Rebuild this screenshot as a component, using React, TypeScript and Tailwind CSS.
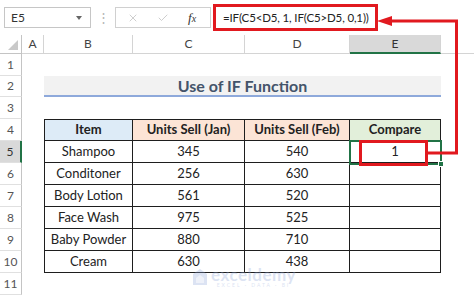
import { Check, X } from "lucide-react";

type Row = {
  n: number;
  h: string;
};

const rows: Row[] = [
  { n: 1, h: "h-[22px]" },
  { n: 2, h: "h-[21px]" },
  { n: 3, h: "h-[22px]" },
  { n: 4, h: "h-[22px]" },
  { n: 5, h: "h-[22px]" },
  { n: 6, h: "h-[22px]" },
  { n: 7, h: "h-[22px]" },
  { n: 8, h: "h-[22px]" },
  { n: 9, h: "h-[22px]" },
  { n: 10, h: "h-[22px]" },
  { n: 11, h: "h-[22px]" },
];

const data: Record<number, [string, string, string, string]> = {
  5: ["Shampoo", "345", "540", "1"],
  6: ["Conditoner", "256", "630", ""],
  7: ["Body Lotion", "561", "520", ""],
  8: ["Face Wash", "975", "525", ""],
  9: ["Baby Powder", "880", "710", ""],
  10: ["Cream", "630", "438", ""],
};

const cell = "flex items-center justify-center shrink-0";
const line = "border-r border-b border-[#1e1e1e]";

const RowHeader = ({ n }: { n: number }) => (
  <div
    className={`${cell} w-[22px] text-[12px] border-b border-[#e0e0e0] ${
      n === 5
        ? "bg-[#d9d9d9] border-r-2 border-r-[#217346] text-[#333]"
        : "border-r border-r-[#c4c4c4] text-[#555]"
    }`}
  >
    {n}
  </div>
);

const SheetRow = ({ row }: { row: Row }) => {
  const d = data[row.n];

  return (
    <div className={`flex ${row.h}`}>
      <RowHeader n={row.n} />
      <div className="w-[22px] shrink-0" />
      {row.n === 2 && (
        <div className="w-[397px] shrink-0 bg-[#f2f2f2] border-b-2 border-[#8ea9db] flex items-center justify-center text-[16px] font-bold text-[#44546a]">
          Use of IF Function
        </div>
      )}
      {row.n === 4 && (
        <>
          <div className={`${cell} ${line} border-l border-t w-[89px] bg-[#ddebf7] font-bold`}>
            Item
          </div>
          <div className={`${cell} ${line} border-t w-[112px] bg-[#fce4d6] font-bold`}>
            Units Sell (Jan)
          </div>
          <div className={`${cell} ${line} border-t w-[105px] bg-[#fce4d6] font-bold`}>
            Units Sell (Feb)
          </div>
          <div className={`${cell} ${line} border-t w-[91px] bg-[#e2efda] font-bold`}>
            Compare
          </div>
        </>
      )}
      {d && (
        <>
          <div className={`${cell} ${line} border-l w-[89px]`}>{d[0]}</div>
          <div className={`${cell} ${line} w-[112px]`}>{d[1]}</div>
          <div className={`${cell} ${line} w-[105px]`}>{d[2]}</div>
          <div className={`${cell} ${line} w-[91px]`}>{d[3]}</div>
        </>
      )}
    </div>
  );
};

const ColHeader = () => (
  <div className="flex h-[19px] text-[12px] text-[#444]">
    <div className="w-[22px] shrink-0 border-r border-b border-[#c4c4c4] flex items-end justify-end p-[3px]">
      <div className="w-0 h-0 border-l-[10px] border-l-transparent border-b-[10px] border-b-[#c9c9c9]" />
    </div>
    <div className={`${cell} w-[22px] border-r border-b border-[#d4d4d4]`}>A</div>
    <div className={`${cell} w-[89px] border-r border-b border-[#d4d4d4]`}>B</div>
    <div className={`${cell} w-[112px] border-r border-b border-[#d4d4d4]`}>C</div>
    <div className={`${cell} w-[105px] border-r border-b border-[#d4d4d4]`}>D</div>
    <div className={`${cell} w-[91px] bg-[#d9d9d9] border-r border-[#d4d4d4] border-b-2 border-b-[#217346] text-[#333]`}>
      E
    </div>
    <div className="flex-1 border-b border-[#d4d4d4]" />
  </div>
);

const Toolbar = () => (
  <div className="flex items-center h-[35px] text-[#333]">
    <div className="ml-[4px] w-[87px] h-[21px] border border-[#c6c6c6] flex items-center justify-between pl-[6px] pr-[8px] text-[12px]">
      <span>E5</span>
      <div className="w-0 h-0 border-l-[3px] border-r-[3px] border-t-[4px] border-l-transparent border-r-transparent border-t-[#666]" />
    </div>
    <div className="w-[24px] text-center text-[13px] text-[#b5b5b5] leading-none">⋮</div>
    <div className="w-[96px] h-[21px] border border-[#d0d0d0] flex items-center">
      <X className="ml-[11px] w-[12px] h-[12px] text-[#bdbdbd]" strokeWidth={1.5} />
      <Check className="ml-[18px] w-[12px] h-[12px] text-[#bdbdbd]" strokeWidth={1.5} />
      <span className="ml-[19px] italic font-['Liberation_Serif',serif] text-[13px] text-[#333]">
        f<span className="text-[10px]">x</span>
      </span>
    </div>
    <div className="ml-[2px] w-[165px] h-[27px] border-[3px] border-[#e1191f] flex items-center pl-[7px] text-[11.5px] tracking-[-0.15px] text-[#222] whitespace-nowrap overflow-hidden">
      =IF(C5&lt;D5, 1, IF(C5&gt;D5, 0,1))
    </div>
  </div>
);

export default function App() {
  return (
    <div className="relative w-[474px] h-[298px] overflow-hidden bg-white font-['Lato',sans-serif] text-[13px] text-[#222]">
      <Toolbar />
      <ColHeader />
      {rows.map((r) => (
        <SheetRow key={r.n} row={r} />
      ))}

      {/* selection of E5 */}
      <div className="absolute left-[349px] top-[140px] w-[93px] h-[25px] border-2 border-[#217346]" />
      <div className="absolute left-[438px] top-[161px] w-[6px] h-[6px] bg-[#217346] border border-white" />

      {/* annotation */}
      <svg className="absolute inset-0 pointer-events-none" width={474} height={298}>
        <rect x={360.5} y={141.5} width={66} height={23} fill="none" stroke="#e1191f" strokeWidth={3} />
        <polyline
          points="427,153 456.5,153 456.5,21 390,21"
          fill="none"
          stroke="#e1191f"
          strokeWidth={3}
        />
        <polygon points="377,21 392,16 392,26" fill="#e1191f" />
      </svg>

      {/* watermark */}
      <div className="absolute left-[192px] top-[266px] flex items-center gap-[3px] opacity-30 pointer-events-none">
        <svg width={16} height={18} viewBox="0 0 16 18">
          <path d="M8 1 L15 6 L15 17 L1 17 L1 6 Z" fill="#8fa6d8" />
          <path d="M4 10 L8 7 L12 10 L12 15 L4 15 Z" fill="#c9d4ee" />
        </svg>
        <div className="flex flex-col leading-none">
          <span className="text-[17px] font-bold text-[#8fa6d8] tracking-[0.5px]">exceldemy</span>
          <span className="text-[5px] text-[#8fa6d8] tracking-[2px] text-center">EXCEL · DATA · BI</span>
        </div>
      </div>
    </div>
  );
}
